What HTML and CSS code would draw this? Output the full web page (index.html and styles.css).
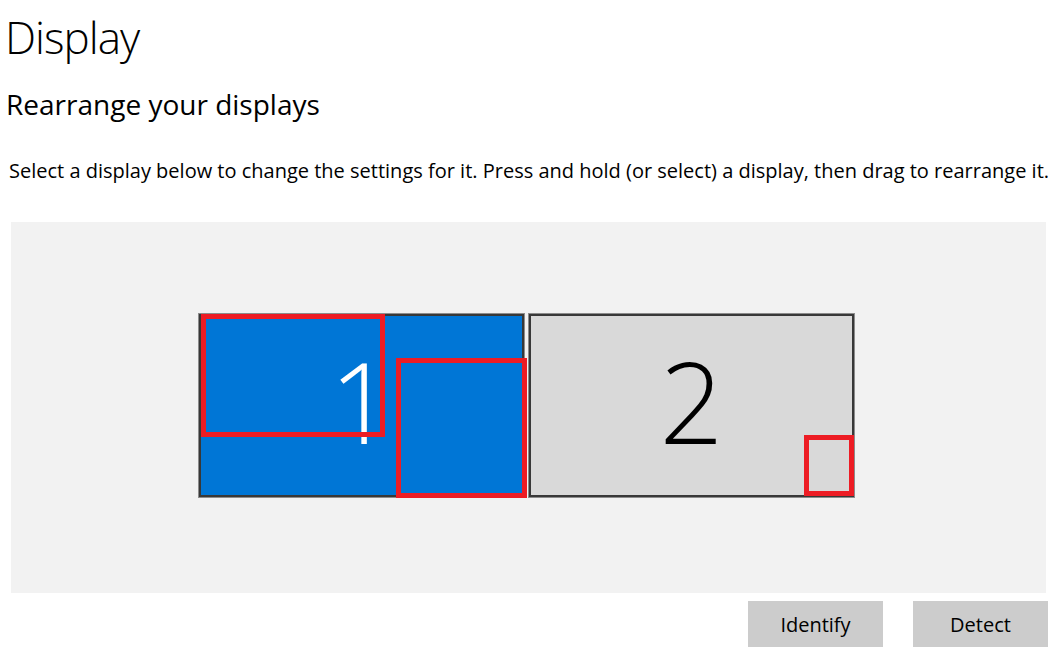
FILE: index.html
```html
<!DOCTYPE html>
<html>
<head>
<meta charset="utf-8">
<link rel="stylesheet" href="styles.css">
</head>
<body>
<h1 class="title">Display</h1>
<h2 class="subtitle">Rearrange your displays</h2>
<p class="desc">Select a display below to change the settings for it. Press and hold (or select) a display, then drag to rearrange it.</p>
<div class="canvas">
  <div class="monitor monitor-1">
    <span class="num num-white">1</span>
    <div class="mark mark-a"></div>
    <div class="mark mark-b"></div>
  </div>
  <div class="monitor monitor-2">
    <span class="num">2</span>
    <div class="mark mark-c"></div>
  </div>
</div>
<div class="actions">
  <button class="btn">Identify</button>
  <button class="btn">Detect</button>
</div>
</body>
</html>
```
FILE: styles.css
```css
html, body {
  margin: 0;
  padding: 0;
  background: #ffffff;
  width: 1054px;
  height: 653px;
  overflow: hidden;
}
body {
  font-family: "Open Sans", "Noto Sans", sans-serif;
  color: #000;
}
.title {
  margin: 0;
  padding: 9px 0 0 5px;
  font-size: 44px;
  font-weight: 300;
  letter-spacing: -1px;
  line-height: 56px;
}
.subtitle {
  margin: 0;
  padding: 22px 0 0 6px;
  font-size: 28px;
  font-weight: 400;
  line-height: 34px;
}
.desc {
  margin: 0;
  padding: 38px 0 0 9px;
  font-size: 20px;
  line-height: 24px;
  white-space: nowrap;
}
.canvas {
  position: relative;
  margin: 39px 0 0 11px;
  width: 1035px;
  height: 371px;
  background: #f2f2f2;
}
.monitor {
  position: absolute;
  top: 92px;
  width: 325px;
  height: 183px;
  box-sizing: border-box;
  border: 2px solid #383838;
  box-shadow: 0 0 0 1px #8c8c8c;
  display: flex;
  align-items: center;
  justify-content: center;
}
.monitor-1 { left: 188px; background: #0076d6; }
.monitor-2 { left: 518px; background: #d9d9d9; }
.num {
  font-size: 112px;
  font-weight: 300;
  line-height: 1;
  color: #000;
  margin-bottom: 10px;
}
.num-white { color: #fff; }
.mark {
  position: absolute;
  box-sizing: border-box;
  border: 5px solid #ed1c24;
}
.mark-a { left: 0px; top: -2px; width: 184px; height: 123px; }
.mark-b { left: 195px; top: 42px; width: 131px; height: 140px; }
.mark-c { left: 273px; top: 119px; width: 50px; height: 61px; }
.actions {
  display: flex;
  gap: 30px;
  padding: 8px 0 0 748px;
}
.btn {
  width: 135px;
  height: 46px;
  border: 0;
  background: #cccccc;
  font-family: "Open Sans", "Noto Sans", sans-serif;
  font-size: 20px;
  color: #000;
  padding: 0;
}
```
